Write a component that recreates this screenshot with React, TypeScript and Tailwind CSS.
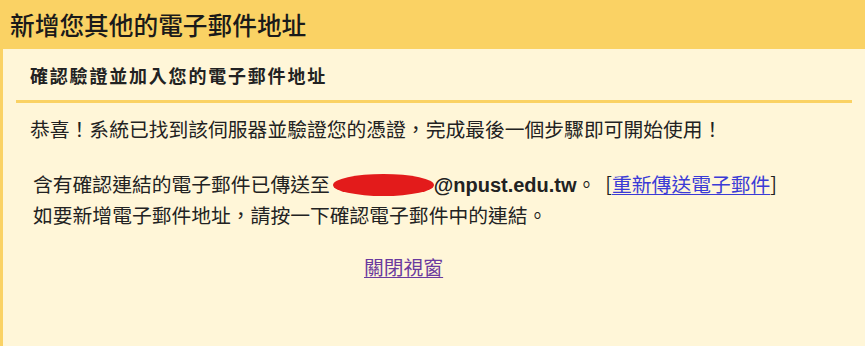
import React from 'react';

const cjk = '"Noto Sans CJK TC", "Liberation Sans", sans-serif';

export default function App() {
  return (
    <div
      className="w-full h-[346px] bg-[#fad264] flex flex-col text-[#222222]"
      style={{ fontFamily: cjk }}
    >
      {/* title bar */}
      <div className="h-[49px] flex items-center pl-[10px] text-[24.7px] leading-none text-[#1a1a1a] font-medium">
        新增您其他的電子郵件地址
      </div>

      <div className="flex-1 ml-[3px] bg-[#fff6d8] pl-[13px] pr-[13px]">
        <div className="h-[51px] flex items-center pl-[14px] text-[18px] font-bold tracking-[1.8px] leading-none">
          確認驗證並加入您的電子郵件地址
        </div>
        <div className="h-[3px] bg-[#fad264]" />

        <div className="pl-[14px] text-[19.8px] leading-[29px]">
          <p className="mt-[11px]">恭喜！系統已找到該伺服器並驗證您的憑證，完成最後一個步驟即可開始使用！</p>

          <p className="mt-[26px] pl-[3px]">
            含有確認連結的電子郵件已傳送至
            <span className="inline-block align-middle w-[101px] h-[22px] ml-[3px] -mt-[3px] rounded-[50%] bg-[#e31b1b]" />
            <span className="font-bold text-[20px]" style={{ fontFamily: '"Liberation Sans", Arial, sans-serif' }}>
              @npust.edu.tw
            </span>
            。<span className="ml-[9px]">[</span>
            <a href="#" className="text-[#3b3bd6] underline underline-offset-2">重新傳送電子郵件</a>]
          </p>
          <p className="pl-[3px]">如要新增電子郵件地址，請按一下確認電子郵件中的連結。</p>

          <div className="mt-[23px] pl-[334px]">
            <a href="#" className="text-[#6a3a9e] underline underline-offset-2">關閉視窗</a>
          </div>
        </div>
      </div>
    </div>
  );
}
